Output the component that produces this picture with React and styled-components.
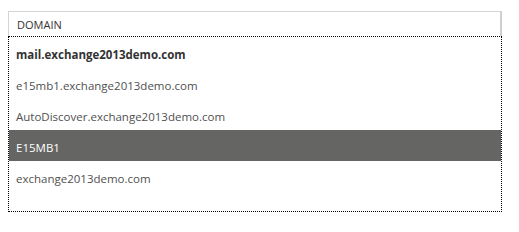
import React from "react";
import styled, { createGlobalStyle } from "styled-components";

const Global = createGlobalStyle`
  html, body { margin: 0; padding: 0; background: #fff; }
  body { font-family: "Open Sans", "Noto Sans", sans-serif; }
`;

const Wrap = styled.div`
  padding: 11px 0 0 8px;
  width: 494px;
`;

const Header = styled.div`
  height: 25px;
  box-sizing: border-box;
  border: 1px solid #d4d4d4;
  border-right: 2px solid #cfcfcf;
  border-bottom: none;
  display: flex;
  align-items: center;
  padding: 1px 0 0 8px;
  font-size: 11px;
  color: #333;
`;

const List = styled.div`
  border: 1px dotted #000;
  box-shadow: 0 1px 0 #d8dede;
  height: 176px;
  box-sizing: border-box;
  display: flex;
  flex-direction: column;
`;

const Row = styled.div`
  height: 31px;
  box-sizing: border-box;
  flex: none;
  display: flex;
  align-items: center;
  padding: 3px 0 0 7px;
  font-size: 11.5px;
  color: ${(p) => (p.$selected ? "#fff" : p.$bold ? "#333" : "#505050")};
  background: ${(p) => (p.$selected ? "#656663" : "transparent")};
  font-weight: ${(p) => (p.$bold ? 700 : 400)};
`;

const rows = [
  { t: "mail.exchange2013demo.com", bold: true },
  { t: "e15mb1.exchange2013demo.com" },
  { t: "AutoDiscover.exchange2013demo.com" },
  { t: "E15MB1", selected: true },
  { t: "exchange2013demo.com" },
];

export default function App() {
  return (
    <>
      <Global />
      <Wrap>
        <Header>DOMAIN</Header>
        <List>
          {rows.map((r) => (
            <Row key={r.t} $bold={r.bold} $selected={r.selected}>
              {r.t}
            </Row>
          ))}
        </List>
      </Wrap>
    </>
  );
}
